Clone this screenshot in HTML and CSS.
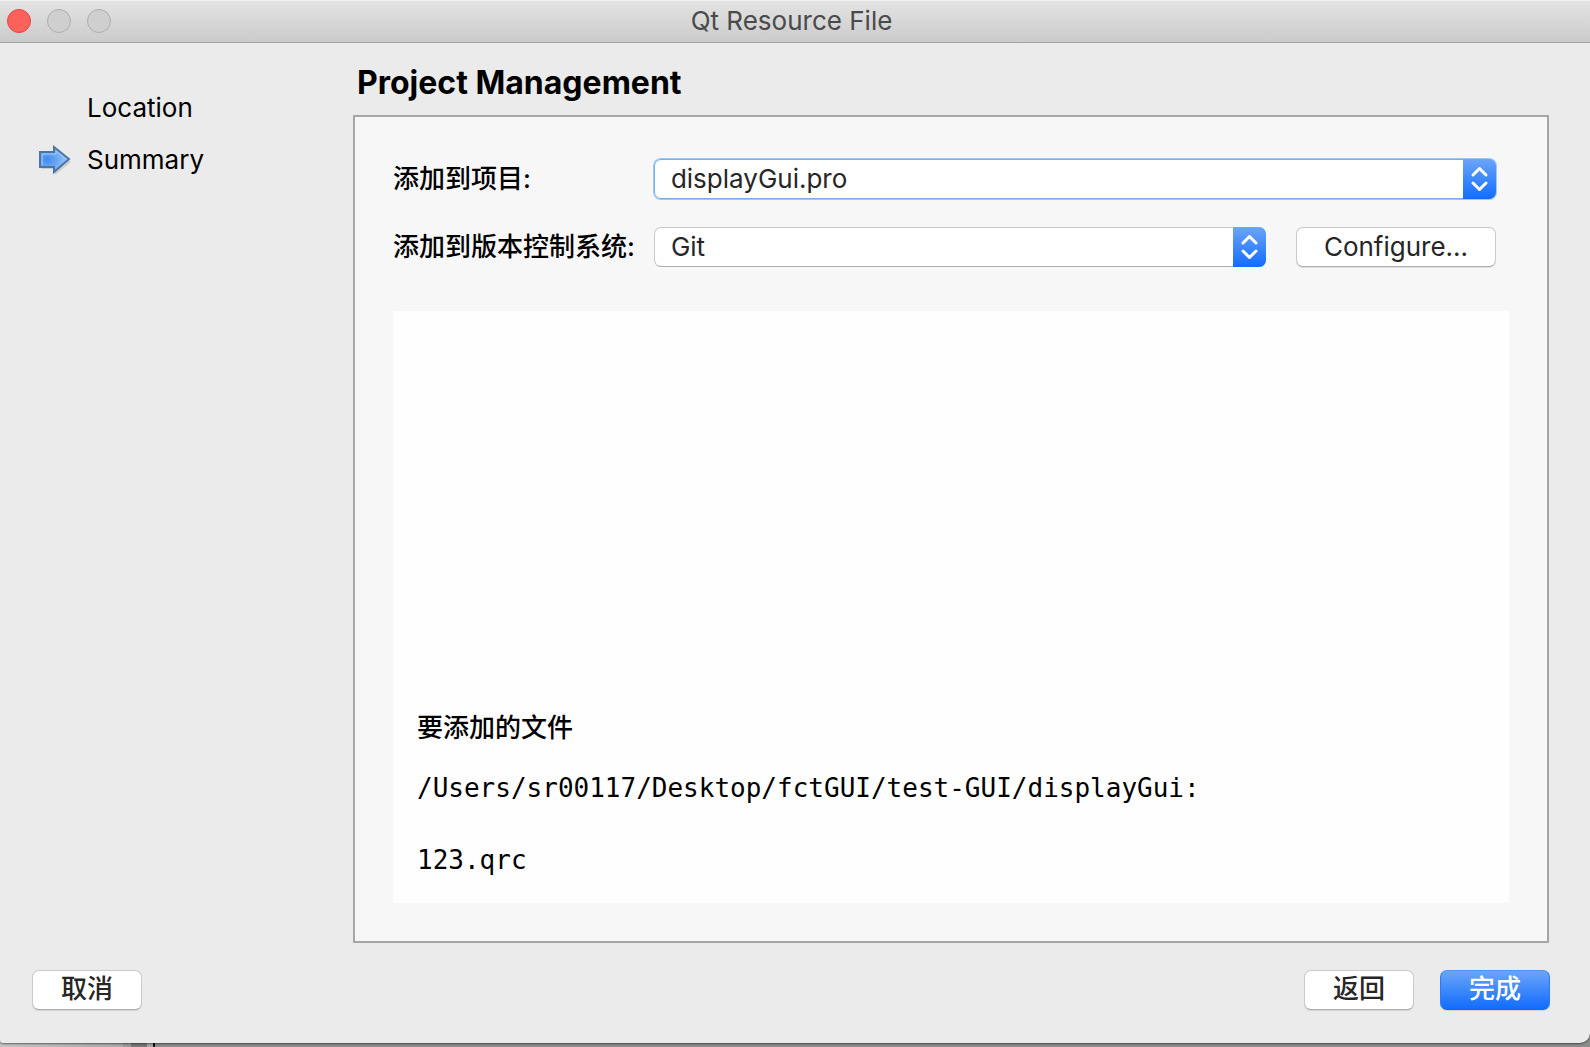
FILE: index.html
```
<!DOCTYPE html>
<html lang="zh-CN">
<head>
    <meta charset="UTF-8">
    <meta name="viewport" content="width=device-width, initial-scale=1.0">
    <title>Qt Resource File</title>
    <link rel="stylesheet" href="styles.css">
</head>
<body>

    <div class="window">
        <header class="titlebar">
            <div class="lights">
                <button type="button" class="light close" aria-label="Close"></button>
                <button type="button" class="light" aria-label="Minimize" disabled></button>
                <button type="button" class="light" aria-label="Zoom" disabled></button>
            </div>
            <div class="title">Qt Resource File</div>
        </header>

        <div class="content">
            <ol class="steps">
                <li>Location</li>
                <li class="current">
                    <svg class="step-arrow" width="34" height="32" viewBox="0 0 34 32" aria-hidden="true">
                        <defs>
                            <radialGradient id="arrowFill" cx="0.25" cy="0.5" r="0.8">
                                <stop offset="0" stop-color="#3d8df0"/>
                                <stop offset="1" stop-color="#a9cdf8"/>
                            </radialGradient>
                        </defs>
                        <path d="M3 11 H17 V5 L33 18 L17 31 V25 H3 Z" fill="#000" opacity="0.12"/>
                        <path d="M2 8 H16 V3 L31 15 L16 28 V23 H2 Z" fill="url(#arrowFill)" stroke="#4a76a6" stroke-width="2"/>
                        <path d="M4 21 V10 H18 V7 L28 15" fill="none" stroke="#a5c9f3" stroke-width="1"/>
                    </svg>
                    Summary
                </li>
            </ol>

            <main class="page">
                <h1>Project Management</h1>
                <div class="panel">
                    <form class="fields" id="projectForm">
                        <label for="project">添加到项目:</label>
                        <div class="combo focused">
                            <select id="project" name="project">
                                <option>displayGui.pro</option>
                            </select>
                            <svg class="combo-arrow" viewBox="0 0 33 40" aria-hidden="true">
                                <path d="M10 16 L16.5 9.5 L23 16 M10 24 L16.5 30.5 L23 24"/>
                            </svg>
                        </div>

                        <label for="vcs">添加到版本控制系统:</label>
                        <div class="vcs">
                            <div class="combo">
                                <select id="vcs" name="vcs">
                                    <option>Git</option>
                                </select>
                                <svg class="combo-arrow" viewBox="0 0 33 40" aria-hidden="true">
                                    <path d="M10 16 L16.5 9.5 L23 16 M10 24 L16.5 30.5 L23 24"/>
                                </svg>
                            </div>
                            <button type="button" class="btn configure">Configure...</button>
                        </div>
                    </form>

                    <div class="files">
                        <p class="files-title">要添加的文件</p>
                        <p class="files-path">/Users/sr00117/Desktop/fctGUI/test-GUI/displayGui:</p>
                        <p class="files-name">123.qrc</p>
                    </div>
                </div>
            </main>
        </div>

        <footer class="actions">
            <button type="button" class="btn cancel">取消</button>
            <button type="button" class="btn">返回</button>
            <button type="submit" form="projectForm" class="btn primary">完成</button>
        </footer>
    </div>

</body>
</html>
```

FILE: styles.css
```
* {
    box-sizing: border-box;
}
body {
    margin: 0;
    height: 100vh;
    padding-bottom: 4px;
    /* the window behind the dialog */
    background: linear-gradient(to right, #c4c6c4 0, #a9aba9 123px, #9a9c9a 123px, #9a9c9a 131px, #777977 131px, #777977 147px, #a5a7a5 147px, #a5a7a5 153px, #111 153px, #111 155px, #8c8e8c 155px);
    font-family: Inter, "Noto Sans CJK SC", sans-serif;
    font-size: 26px;
    line-height: 32px;
    color: #000;
}
.window {
    display: flex;
    flex-direction: column;
    height: 100%;
    background: #ebebeb;
    border-radius: 0 0 10px 3px;
    box-shadow: 0 1px 2px rgba(0,0,0,0.5);
    overflow: hidden;
}
.titlebar {
    display: grid;
    grid-template-columns: 1fr auto 1fr;
    align-items: center;
    height: 43px;
    padding: 0 14px 0 7px;
    background: linear-gradient(#e4e4e4, #cbcbcb);
    border-bottom: 1px solid #a3a3a3;
    box-shadow: inset 0 1px 0 #f2f2f2;
}
.lights {
    display: flex;
    gap: 16px;
}
.light {
    width: 24px;
    height: 24px;
    padding: 0;
    border: 1px solid #aeaeae;
    border-radius: 50%;
    background: #cfcfcf;
}
.light.close {
    border-color: #e2463f;
    background: #fc615c;
}
.title {
    color: #4a4a4a;
}
.content {
    flex: 1;
    display: flex;
    min-height: 0;
}
.steps {
    display: flex;
    flex-direction: column;
    gap: 20px;
    width: 353px;
    margin: 0;
    padding: 49px 38px 0;
    list-style: none;
}
.steps li {
    display: flex;
    align-items: center;
    padding-left: 49px;
}
.steps .current {
    gap: 15px;
    padding-left: 0;
}
.page {
    flex: 1;
    display: flex;
    flex-direction: column;
    padding: 20px 41px 0 0;
}
h1 {
    margin: 0 0 12px;
    padding-left: 4px;
    font-size: 32px;
    line-height: 40px;
}
.panel {
    flex: 1;
    display: flex;
    flex-direction: column;
    gap: 44px;
    padding: 42px 38px 38px;
    background: #f7f7f7;
    border: 2px solid #a6a6a6;
}
.fields {
    display: grid;
    grid-template-columns: auto 1fr;
    align-items: center;
    gap: 28px 19px;
    padding-right: 13px;
}
.fields label,
.files-title {
    font-weight: 500;
}
.vcs {
    display: flex;
    gap: 30px;
}
.combo {
    position: relative;
    flex: 1;
    height: 40px;
    border-radius: 7px;
}
.combo select {
    display: block;
    width: 100%;
    height: 100%;
    padding: 0 50px 0 16px;
    border: 1px solid #cacaca;
    border-bottom-color: #aeaeae;
    border-radius: 7px;
    background: #fff;
    color: #262626;
    font: inherit;
    appearance: none;
}
.combo.focused {
    box-shadow: 0 0 0 1px #9cc8f6;
}
.combo.focused select {
    border-color: #7aaee6;
}
.combo-arrow {
    position: absolute;
    top: 0;
    right: 0;
    width: 33px;
    height: 40px;
    border-radius: 0 7px 7px 0;
    background: linear-gradient(#6ba5f8, #116cfe);
    fill: none;
    stroke: #fff;
    stroke-width: 3;
    stroke-linecap: round;
    stroke-linejoin: round;
    pointer-events: none;
}
.btn {
    width: 110px;
    height: 40px;
    padding: 0 0 2px;
    border: 1px solid #cacaca;
    border-bottom-color: #adadad;
    border-radius: 7px;
    background: #fff;
    box-shadow: 0 1px 1px rgba(0,0,0,0.1);
    color: #262626;
    font: inherit;
    font-weight: 500;
}
.configure {
    width: 200px;
    padding: 0;
    font-weight: 400;
}
.primary {
    border-color: #4b93f9 #2a7afb #1566f0;
    background: linear-gradient(#6ba5f8, #116cfe);
    color: #fff;
}
.files {
    flex: 1;
    display: flex;
    flex-direction: column;
    justify-content: flex-end;
    padding: 0 24px 27px;
    background: #fefefe;
}
.files p {
    margin: 0;
}
.files .files-title {
    margin-bottom: 28px;
}
.files-path,
.files-name {
    font-family: "DejaVu Sans Mono", monospace;
}
.files .files-path {
    margin-bottom: 40px;
}
.actions {
    display: flex;
    gap: 26px;
    padding: 27px 40px 33px 32px;
}
.cancel {
    margin-right: auto;
}
```
